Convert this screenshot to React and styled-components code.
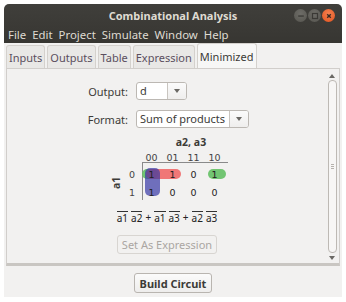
import React from "react";
import styled, { createGlobalStyle } from "styled-components";

const Global = createGlobalStyle`
  html, body { margin: 0; padding: 0; background: #ffffff; }
  body { font-family: "Noto Sans", "DejaVu Sans", sans-serif; }
`;

const Window = styled.div`
  margin: 4px;
  width: 338px;
  height: 293px;
  display: flex;
  flex-direction: column;
  background: #f2f1f0;
  border-radius: 5px 5px 0 0;
  overflow: hidden;
`;

const Header = styled.div`
  background: linear-gradient(#403f3b, #373632);
  display: flex;
  flex-direction: column;
  height: 39px;
`;

const TitleBar = styled.div`
  height: 22px;
  display: flex;
  align-items: center;
  justify-content: center;
  position: relative;
  color: #dfdbd2;
  font-weight: bold;
  font-size: 11px;
  padding-top: 1px;
`;

const Controls = styled.div`
  position: absolute;
  right: 7px;
  top: 5px;
  display: flex;
  gap: 1px;
`;

const Circle = styled.div`
  width: 13px;
  height: 13px;
  border-radius: 50%;
  background: ${(p) =>
    p.$close
      ? "radial-gradient(circle at 50% 35%, #f4804f, #e2531f)"
      : "radial-gradient(circle at 50% 35%, #6d6c67, #56554f)"};
  display: flex;
  align-items: center;
  justify-content: center;
`;

const MenuBar = styled.div`
  height: 17px;
  display: flex;
  align-items: center;
  gap: 6px;
  padding-left: 4px;
  color: #dfdbd2;
  font-size: 11.4px;
`;

const Tabs = styled.div`
  display: flex;
  padding: 0 2px;
  gap: 2px;
  height: 25px;
  align-items: flex-end;
`;

const Tab = styled.div`
  height: ${(p) => (p.$active ? "25px" : "23px")};
  box-sizing: border-box;
  padding: 1px 2px 0;
  display: flex;
  align-items: center;
  font-size: 11px;
  color: ${(p) => (p.$active ? "#3c3b37" : "#5b4f5e")};
  background: ${(p) => (p.$active ? "#f7f7f6" : "#e9e8e6")};
  border: 1px solid #d4d1cd;
  border-bottom: none;
  border-radius: 3px 3px 0 0;
`;

const Panel = styled.div`
  margin: 0 2px;
  height: 198px;
  box-sizing: border-box;
  border: 1px solid #d1cecb;
  border-bottom: 3px solid #c9c6c2;
  display: flex;
  background: #f2f1f0;
`;

const Content = styled.div`
  flex: 1;
  display: flex;
  flex-direction: column;
  align-items: center;
  padding-top: 13px;
`;

const Fields = styled.div`
  align-self: stretch;
  display: flex;
  flex-direction: column;
  gap: 10px;
  padding-left: 66px;
`;

const FieldRow = styled.div`
  display: flex;
  align-items: center;
  gap: 8px;
`;

const Label = styled.div`
  width: 55px;
  text-align: right;
  font-size: 11px;
  color: #3c3b37;
`;

const Combo = styled.div`
  display: flex;
  height: 18px;
  box-sizing: border-box;
  border: 1px solid #bcb8b3;
  border-radius: 3px;
  background: #ffffff;
  overflow: hidden;
`;

const ComboText = styled.div`
  width: ${(p) => p.$w}px;
  padding-left: 3px;
  box-sizing: border-box;
  font-size: 11px;
  line-height: 16px;
  color: #3c3b37;
  border-right: 1px solid #c9c5c0;
  white-space: nowrap;
`;

const ComboArrow = styled.div`
  width: 18px;
  display: flex;
  align-items: center;
  justify-content: center;
  background: linear-gradient(#fbfbfb, #efeeed);
`;

const MapTitle = styled.div`
  font-size: 10.5px;
  font-weight: bold;
  line-height: 14px;
  color: #3c3b37;
  margin-top: 7px;
  margin-left: 48px;
`;

const KMap = styled.div`
  display: grid;
  grid-template-columns: 14px 18px 21px 21px 21px 21px;
  grid-template-rows: 16px 18px 18px;
  position: relative;
  font-family: "DejaVu Sans", sans-serif;
  font-size: 9.5px;
  color: #222;
`;

const Cell = styled.div`
  display: flex;
  align-items: center;
  justify-content: center;
  position: relative;
  z-index: 2;
`;

const VarLabel = styled.div`
  grid-row: 2 / 4;
  grid-column: 1;
  display: flex;
  align-items: center;
  justify-content: center;
  writing-mode: vertical-rl;
  transform: rotate(180deg);
  font-family: "Noto Sans", sans-serif;
  font-weight: bold;
  font-size: 10.5px;
  color: #3c3b37;
`;

const Head = styled(Cell)`
  color: #444;
`;

const Lines = styled.div`
  position: absolute;
  left: 33px;
  top: 13px;
  width: 85px;
  height: 37px;
  border-left: 1px solid #8a8a8a;
  border-top: 1px solid #8a8a8a;
  z-index: 1;
`;

const Group = styled.div`
  position: absolute;
  border-radius: 5px;
  z-index: 1;
  background: ${(p) => p.$c};
`;

const Expr = styled.div`
  display: flex;
  align-items: center;
  gap: 3px;
  margin-top: 9px;
  font-size: 10px;
  color: #222;
`;

const Term = styled.span`
  display: flex;
  gap: 3px;
`;

const Bar = styled.span`
  border-top: 1px solid #333;
  line-height: 12px;
`;

const Button = styled.div`
  height: ${(p) => (p.$disabled ? 19 : 20)}px;
  box-sizing: border-box;
  padding: 0 ${(p) => (p.$disabled ? 4 : 5)}px;
  display: flex;
  align-items: center;
  border: 1px solid ${(p) => (p.$disabled ? "#d8d5d1" : "#b9b5b0")};
  border-radius: 3px;
  background: ${(p) => (p.$disabled ? "#f2f1f0" : "linear-gradient(#fbfbfb, #eeedec)")};
  color: ${(p) => (p.$disabled ? "#aaa6a2" : "#3c3b37")};
  font-size: 11px;
  font-weight: ${(p) => (p.$bold ? "bold" : "normal")};
  margin-top: ${(p) => p.$mt || 0}px;
`;

const Scroll = styled.div`
  width: 10px;
  margin: 2px 2px 1px 0;
  display: flex;
  flex-direction: column;
  align-items: center;
`;

const ScrollBtn = styled.div`
  height: 9px;
  width: 10px;
  display: flex;
  align-items: center;
  justify-content: center;
`;

const Thumb = styled.div`
  flex: 1;
  width: 9px;
  box-sizing: border-box;
  border: 1px solid #bdb9b4;
  border-radius: 4px;
  background: #f7f6f5;
  display: flex;
  flex-direction: column;
  align-items: center;
  justify-content: center;
  gap: 1px;
`;

const Grip = styled.div`
  width: 3px;
  height: 1px;
  background: #b5b1ac;
`;

const Footer = styled.div`
  flex: 1;
  display: flex;
  justify-content: center;
  padding-top: 7px;
`;

const Arrow = ({ up }) => (
  <svg width="6" height="4" viewBox="0 0 6 4">
    <path d={up ? "M0 4 L3 0 L6 4 Z" : "M0 0 L6 0 L3 4 Z"} fill="#6a6864" />
  </svg>
);

export default function App() {
  const cols = ["00", "01", "11", "10"];
  const rows = [
    ["0", ["1", "1", "0", "1"]],
    ["1", ["1", "0", "0", "0"]],
  ];
  const terms = [
    ["a1", "a2"],
    ["a1", "a3"],
    ["a2", "a3"],
  ];
  return (
    <>
      <Global />
      <Window>
        <Header>
          <TitleBar>
            Combinational Analysis
            <Controls>
              <Circle>
                <svg width="8" height="8" viewBox="0 0 8 8"><rect x="1.2" y="3.4" width="5.6" height="1.3" fill="#3a3935" /></svg>
              </Circle>
              <Circle>
                <svg width="8" height="8" viewBox="0 0 8 8"><rect x="1.5" y="1.5" width="5" height="5" fill="none" stroke="#3a3935" strokeWidth="1.2" /></svg>
              </Circle>
              <Circle $close>
                <svg width="8" height="8" viewBox="0 0 8 8"><path d="M2.2 2.2 L5.8 5.8 M5.8 2.2 L2.2 5.8" stroke="#3a2a22" strokeWidth="1.4" /></svg>
              </Circle>
            </Controls>
          </TitleBar>
          <MenuBar>
            <span>File</span>
            <span>Edit</span>
            <span>Project</span>
            <span>Simulate</span>
            <span>Window</span>
            <span>Help</span>
          </MenuBar>
        </Header>
        <Tabs>
          <Tab>Inputs</Tab>
          <Tab>Outputs</Tab>
          <Tab>Table</Tab>
          <Tab>Expression</Tab>
          <Tab $active>Minimized</Tab>
        </Tabs>
        <Panel>
          <Content>
            <Fields>
              <FieldRow>
                <Label>Output:</Label>
                <Combo>
                  <ComboText $w={31}>d</ComboText>
                  <ComboArrow><Arrow /></ComboArrow>
                </Combo>
              </FieldRow>
              <FieldRow>
                <Label>Format:</Label>
                <Combo>
                  <ComboText $w={93}>Sum of products</ComboText>
                  <ComboArrow><Arrow /></ComboArrow>
                </Combo>
              </FieldRow>
            </Fields>
            <MapTitle>a2, a3</MapTitle>
            <KMap>
              <Cell />
              <Cell />
              {cols.map((c) => (
                <Head key={c}>{c}</Head>
              ))}
              <VarLabel>a1</VarLabel>
              {rows.map(([r, vals]) => (
                <React.Fragment key={r}>
                  <Head style={{ gridColumn: 2 }}>{r}</Head>
                  {vals.map((v, i) => (
                    <Cell key={i}>{v}</Cell>
                  ))}
                </React.Fragment>
              ))}
              <Lines />
              <Group $c="rgba(100,192,100,0.9)" style={{ left: 33, top: 20, width: 16, height: 10 }} />
              <Group $c="rgba(100,192,100,0.9)" style={{ left: 99, top: 20, width: 18, height: 10 }} />
              <Group $c="rgba(240,105,105,0.9)" style={{ left: 37, top: 20, width: 35, height: 10 }} />
              <Group $c="rgba(55,55,165,0.7)" style={{ left: 36, top: 19, width: 15, height: 28 }} />
            </KMap>
            <Expr>
              {terms.map((t, i) => (
                <React.Fragment key={i}>
                  {i > 0 && <span>+</span>}
                  <Term>
                    <Bar>{t[0]}</Bar>
                    <Bar>{t[1]}</Bar>
                  </Term>
                </React.Fragment>
              ))}
            </Expr>
            <Button $disabled $mt={11}>Set As Expression</Button>
          </Content>
          <Scroll>
            <ScrollBtn><Arrow up /></ScrollBtn>
            <Thumb>
              <Grip />
              <Grip />
              <Grip />
            </Thumb>
            <ScrollBtn><Arrow /></ScrollBtn>
          </Scroll>
        </Panel>
        <Footer>
          <Button $bold>Build Circuit</Button>
        </Footer>
      </Window>
    </>
  );
}
